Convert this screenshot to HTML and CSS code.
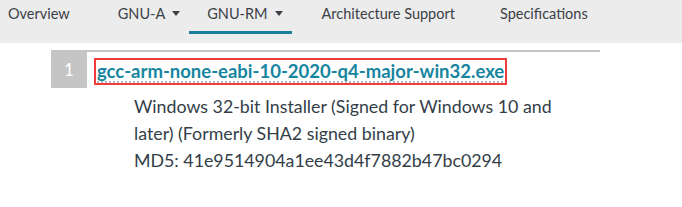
FILE: index.html
```html
<!DOCTYPE html>
<html lang="en">
<head>
    <meta charset="UTF-8">
    <meta name="viewport" content="width=device-width, initial-scale=1.0">
    <title>GNU-RM Downloads</title>
    <link rel="stylesheet" href="styles.css">
</head>
<body>

    <nav class="tabs">
        <a class="tab" href="#">Overview</a>
        <a class="tab tab-drop" href="#">GNU-A <span class="caret"></span></a>
        <a class="tab tab-drop active" href="#">GNU-RM <span class="caret"></span></a>
        <a class="tab" href="#">Architecture Support</a>
        <a class="tab" href="#">Specifications</a>
    </nav>

    <section class="downloads">
        <div class="download-row">
            <div class="row-num">1</div>
            <div class="row-body">
                <a class="file-link" href="#">gcc-arm-none-eabi-10-2020-q4-major-win32.exe</a>
                <p class="file-info">Windows 32-bit Installer (Signed for Windows 10 and later) (Formerly SHA2 signed binary)<br>MD5: 41e9514904a1ee43d4f7882b47bc0294</p>
            </div>
        </div>
    </section>

</body>
</html>
```

FILE: styles.css
```css
body {
    font-family: Lato, "Open Sans", sans-serif;
    color: #333e48;
    background-color: white;
    margin: 0;
    padding: 0;
}
.tabs {
    display: flex;
    background-color: #ececec;
    height: 43px;
    padding-left: 8px;
}
.tab {
    display: flex;
    align-items: center;
    height: 26px;
    padding: 0 18px 5px;
    border-bottom: 3px solid transparent;
    color: #3b4147;
    font-size: 14.5px;
    text-decoration: none;
}
.tab:first-child {
    padding-left: 0;
    margin-right: 12px;
}
.tab-drop {
    padding-right: 9px;
}
.tab.active {
    border-bottom-color: #1a7f9b;
}
.caret {
    width: 0;
    height: 0;
    margin-left: 7px;
    border-left: 4px solid transparent;
    border-right: 4px solid transparent;
    border-top: 5px solid #3b4147;
}
.tab:nth-child(4) {
    margin-left: 12px;
    margin-right: 9px;
}
.downloads {
    padding: 7px 0 0 51px;
}
.download-row {
    display: flex;
    align-items: flex-start;
}
.row-num {
    width: 36px;
    height: 38px;
    line-height: 40px;
    background-color: #c4c5c4;
    color: white;
    font-size: 17px;
    text-align: center;
}
.row-body {
    width: 506px;
    border-top: 2px solid #c4c4c4;
    padding: 6px 0 0 7px;
}
.file-link {
    display: inline-block;
    border: 2px solid #f23c3c;
    padding: 0 1px;
    line-height: 23px;
    color: #16859f;
    font-size: 18.5px;
    font-weight: bold;
    text-decoration: underline dotted #9fb8c2;
    text-underline-offset: 4px;
}
.file-info {
    margin: 8px 0 0 40px;
    width: 440px;
    font-size: 17.8px;
    line-height: 27px;
    color: #333e48;
}
```
